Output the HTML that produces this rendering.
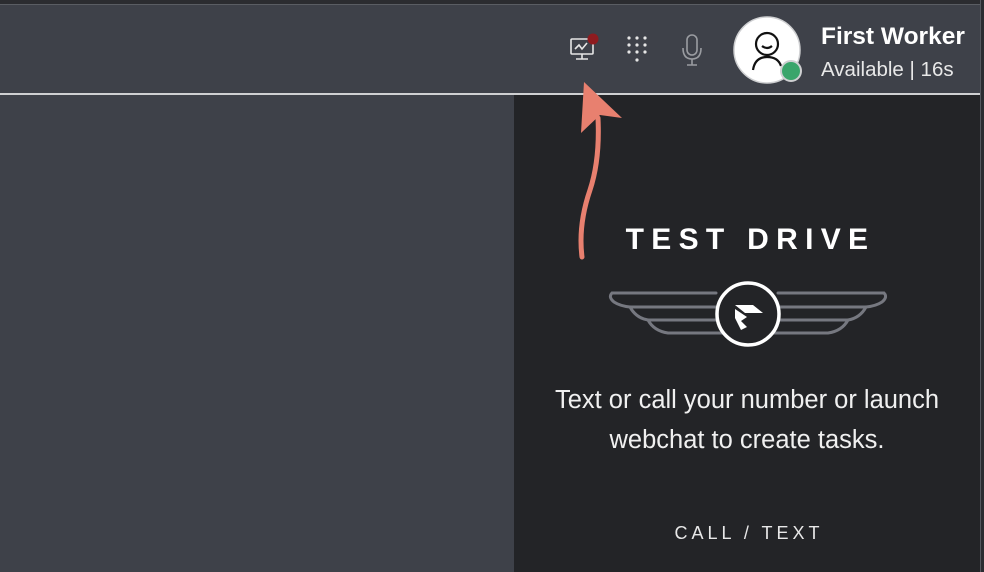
<!DOCTYPE html>
<html><head><style>
*{margin:0;padding:0;box-sizing:border-box}
body{width:984px;height:572px;overflow:hidden;background:#3e4149;font-family:"Liberation Sans",sans-serif;position:relative}
.top{position:absolute;left:0;top:0;width:984px;height:5px;background:#2b2c30;border-bottom:1px solid #5a5d63}
.hdr{position:absolute;left:0;top:6px;width:981px;height:88px;background:#3e4149}
.line{position:absolute;left:0;top:93px;width:981px;height:2px;background:#cfd0d2}
.edge{position:absolute;left:980px;top:0;width:4px;height:572px;background:#2b2c30;border-left:1px solid #55585e}
.panel{position:absolute;left:514px;top:95px;width:466px;height:477px;background:#232427;color:#fff;text-align:center}
.t{position:absolute;left:0;width:466px;text-align:center;white-space:nowrap}
</style></head><body>
<div class="top"></div>
<div class="hdr"></div>
<div class="line"></div>
<div class="panel">
<div class="t" style="top:128px;font-size:30px;font-weight:bold;letter-spacing:7.3px;padding-left:7px;">TEST DRIVE</div>
<div class="t" style="top:285px;font-size:25.5px;line-height:40px;color:#f0f0f0">Text or call your number or launch<br>webchat to create tasks.</div>
<div class="t" style="top:428px;font-size:18px;letter-spacing:4px;color:#e8e8e8;padding-left:4px">CALL / TEXT</div>
</div>
<div class="edge"></div>
<svg width="984" height="572" style="position:absolute;left:0;top:0">
 <g fill="none" stroke="#767880" stroke-width="3" stroke-linecap="round">
  <path d="M716 293 H612 Q608 297 614 302 Q620 306 630 307 H716"/>
  <path d="M630 307 Q636 318 648 320 H716"/>
  <path d="M648 320 Q654 331 668 333 H730"/>
  <path d="M778 293 H884 Q888 297 882 302 Q876 306 866 307 H778"/>
  <path d="M866 307 Q860 318 848 320 H778"/>
  <path d="M848 320 Q842 331 828 333 H766"/>
 </g>
 <circle cx="748" cy="314" r="31" fill="#232427" stroke="#fff" stroke-width="3.5"/>
 <path d="M735 305 L753 305 L763 313 L745 313 Z" fill="#fff"/>
 <path d="M735 309 L747 317 L741 321 L747 327 L741 330 L735 318 Z" fill="#fff"/>
 <g fill="none" stroke="#e6e6e6" stroke-width="1.6">
  <rect x="571" y="39" width="22" height="15" rx="1"/>
  <path d="M582 54 V59 M576 59 H588"/>
  <path d="M575 49 L579 45 L582 49 L587 43"/>
 </g>
 <circle cx="593" cy="39" r="5.5" fill="#8e1b1f"/>
 <g fill="#e6e6e6">
  <circle cx="629" cy="38" r="1.6"/><circle cx="637" cy="38" r="1.6"/><circle cx="645" cy="38" r="1.6"/>
  <circle cx="629" cy="45" r="1.6"/><circle cx="637" cy="45" r="1.6"/><circle cx="645" cy="45" r="1.6"/>
  <circle cx="629" cy="52" r="1.6"/><circle cx="637" cy="52" r="1.6"/><circle cx="645" cy="52" r="1.6"/>
  <circle cx="637" cy="60" r="1.6"/>
 </g>
 <g fill="none" stroke="#9a9ca1" stroke-width="1.6">
  <rect x="687" y="35" width="10" height="20" rx="5"/>
  <path d="M683 48 Q683 59 692 59 Q701 59 701 48 M692 59 V65 M687 65 H697"/>
 </g>
 <circle cx="767" cy="50" r="33" fill="#fff" stroke="#cfd0d2" stroke-width="1.5"/>
 <g fill="none" stroke="#111" stroke-width="2.2">
  <circle cx="767" cy="44" r="11"/>
  <path d="M762 46 Q767 50 772 46"/>
  <path d="M753 70 Q755 57 767 57 Q778 57 781 66"/>
 </g>
 <circle cx="791" cy="71" r="10" fill="#3aa56b" stroke="#cfd0d2" stroke-width="2"/>
 <text x="821" y="44" fill="#fff" font-family="Liberation Sans" font-weight="bold" font-size="24.5">First Worker</text>
 <text x="821" y="76" fill="#e8e8e8" font-family="Liberation Sans" font-size="20.5">Available | 16s</text>
 <path d="M598 118 Q600 160 590 190 Q578 225 582 257" fill="none" stroke="#e8806f" stroke-width="5" stroke-linecap="round"/>
 <path d="M584 82 L622 118 L600 115 L581 133 Z" fill="#e8806f"/>
</svg>
</body></html>
